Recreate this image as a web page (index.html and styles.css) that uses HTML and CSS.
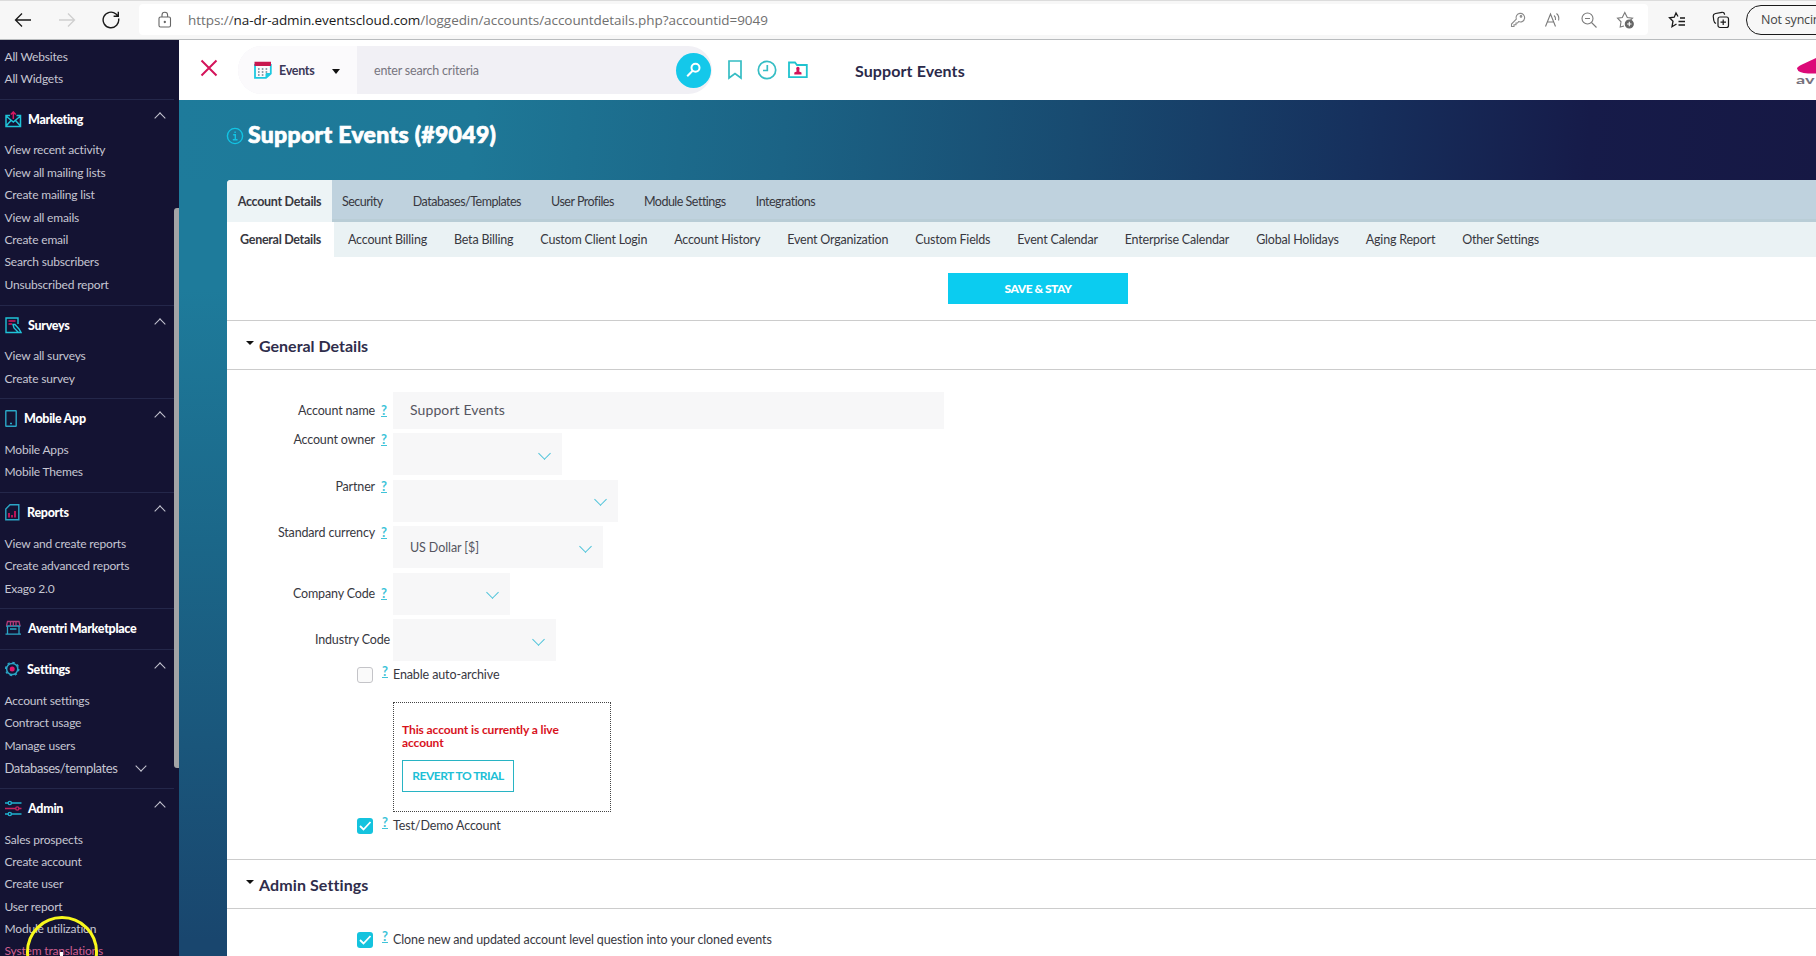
FILE: index.html
```html
<!DOCTYPE html>
<html lang="en">
<head>
    <meta charset="UTF-8">
    <meta name="viewport" content="width=device-width, initial-scale=1.0">
    <title>Support Events (#9049)</title>
    <link rel="stylesheet" href="styles.css">
</head>
<body>
    <div class="browser-bar">
        <div class="nav-buttons">
            <svg width="18" height="18" viewBox="0 0 18 18" fill="none" stroke="#1a1a1a" stroke-width="1.3"><path d="M17 9H1.5M8 2.5L1.5 9L8 15.5"/></svg>
            <svg width="18" height="18" viewBox="0 0 18 18" fill="none" stroke="#cfcfcf" stroke-width="1.3"><path d="M1 9H16.5M10 2.5L16.5 9L10 15.5"/></svg>
            <svg width="18" height="18" viewBox="0 0 18 18" fill="none" stroke="#1a1a1a" stroke-width="1.4"><path d="M16.6 7.5A7.8 7.8 0 1 1 14 3L16 5M16.3 0.8V5.3H11.6"/></svg>
        </div>
        <div class="address">
            <svg class="lock" width="14" height="18" viewBox="0 0 14 18" fill="none" stroke="#666" stroke-width="1.1"><rect x="1" y="6" width="11.5" height="10" rx="1.5"/><path d="M4 6V4a2.8 2.8 0 0 1 5.6 0V6"/><circle cx="6.8" cy="11" r="0.6" fill="#666"/></svg>
            <span class="url">https://<b>na-dr-admin.eventscloud.com</b>/loggedin/accounts/accountdetails.php?accountid=9049</span>
            <div class="address-icons">
                <svg width="16" height="18" viewBox="0 0 16 18" fill="none" stroke="#8a8a8a" stroke-width="1.1"><path d="M6.3 8.2L1.5 13V15.5H4V13.8H6V12H7.5L8.6 10.6A4.3 4.3 0 1 0 6.3 8.2Z"/><circle cx="11" cy="5.4" r="0.8"/></svg>
                <svg width="18" height="18" viewBox="0 0 18 18" fill="none" stroke="#7a7a7a" stroke-width="1.1"><path d="M1.5 15.5L6.5 3L11.5 15.5M3.3 11H9.8M10 4.5Q12 6 11.5 9M12.5 2.5Q15.6 5 14.6 9.5"/></svg>
                <svg width="18" height="18" viewBox="0 0 18 18" fill="none" stroke="#7a7a7a" stroke-width="1.1"><circle cx="7.5" cy="7.5" r="5.5"/><path d="M5 7.5H10M11.5 11.5L16.5 16.5"/></svg>
                <svg width="19" height="18" viewBox="0 0 19 18" fill="none" stroke="#7a7a7a" stroke-width="1.1"><path d="M8 15L4.2 16L5 10.8L1.5 7.2L6.3 6.5L8.8 1.5L11.3 6.5L16.5 7.2L14.5 9"/><circle cx="13.3" cy="13" r="4" fill="#666" stroke="#666"/><path d="M13.3 10.8V15.2M11.1 13H15.5" stroke="#fff"/></svg>
            </div>
        </div>
        <div class="bar-icons">
            <svg width="18" height="18" viewBox="0 0 18 18" fill="none" stroke="#1a1a1a" stroke-width="1.3"><path d="M10 5.5L8 2L6.2 6.2L1.5 6.8L5 10.2L4 15.8L8.5 13M12 7H17M10.5 10.5H17M10.5 14H17"/></svg>
            <svg width="18" height="18" viewBox="0 0 18 18" fill="none" stroke="#1a1a1a" stroke-width="1.2"><rect x="6" y="6" width="10.5" height="10.5" rx="2"/><path d="M11.2 8.5V14M8.5 11.2H14M4 12.5Q2 11.5 1.8 9.5L1.2 5Q1.2 3 3.5 2.5L10 1.3Q12.3 1 12.6 3.8"/></svg>
        </div>
        <div class="sync">Not syncing</div>
    </div>

    <div class="page">
        <div class="sidebar">
            <div class="menu first">
                <a>All Websites</a>
                <a>All Widgets</a>
            </div>
            <div class="menu">
                <h3><svg width="17" height="17" viewBox="0 0 17 17" fill="none" stroke="#1fc3d8" stroke-width="1.5"><path d="M5 4.5H1V15.5H15.5V4.5H11.5M1 5L8.3 11L15.5 5M1 15L6 9.5M15.5 15L10.5 9.5"/><path d="M8.3 8V1.5M5.8 3.5L8.3 1L10.8 3.5" stroke="#d6185f"/></svg><span>Marketing</span><i class="up"></i></h3>
                <a>View recent activity</a>
                <a>View all mailing lists</a>
                <a>Create mailing list</a>
                <a>View all emails</a>
                <a>Create email</a>
                <a>Search subscribers</a>
                <a>Unsubscribed report</a>
            </div>
            <div class="menu">
                <h3><svg width="17" height="17" viewBox="0 0 17 17" fill="none" stroke="#1fc3d8" stroke-width="1.4"><path d="M13 7V1H1V15.5H13M8 7.5L9 11L13.5 15.5H16L14 12L10 7.5Z"/><path d="M3.5 4H10.5M3.5 7H7" stroke="#d6185f"/></svg><span>Surveys</span><i class="up"></i></h3>
                <a>View all surveys</a>
                <a>Create survey</a>
            </div>
            <div class="menu">
                <h3 class="narrow"><svg width="12" height="17" viewBox="0 0 12 17" fill="none" stroke="#2ba6c6" stroke-width="1.4"><rect x="0.8" y="0.8" width="10.4" height="15.4" rx="0.5"/><path d="M5 13.5H7"/></svg><span>Mobile App</span><i class="up"></i></h3>
                <a>Mobile Apps</a>
                <a>Mobile Themes</a>
            </div>
            <div class="menu">
                <h3 class="narrow"><svg width="15" height="17" viewBox="0 0 15 17" fill="none" stroke="#2ba6c6" stroke-width="1.4"><path d="M5 0.8H13.8V15.7H0.8V5Z"/><path d="M4 9V13.5M7 11V13.5M10 7V13.5" stroke="#d6185f" stroke-width="1.7"/></svg><span>Reports</span><i class="up"></i></h3>
                <a>View and create reports</a>
                <a>Create advanced reports</a>
                <a>Exago 2.0</a>
            </div>
            <div class="menu market">
                <h3><svg width="17" height="17" viewBox="0 0 17 17" fill="none" stroke="#2ba6c6" stroke-width="1.3"><path d="M2.5 6V14.2H14V6M0.5 14.2H16M1 6H15.5M5 9H11.5"/><path d="M1.5 6L2.5 1.5H14L15 6M5.5 2V6M8.3 2V6M11 2V6" stroke="#b03b77"/></svg><span>Aventri Marketplace</span></h3>
            </div>
            <div class="menu">
                <h3 class="narrow"><svg width="15" height="17" viewBox="0 0 15 17" fill="none"><circle cx="7.2" cy="8" r="5.6" stroke="#2ba6c6" stroke-width="1.5"/><circle cx="7.2" cy="8" r="6.6" stroke="#2ba6c6" stroke-width="1.4" stroke-dasharray="2.4 2.78"/><circle cx="7.2" cy="8" r="2.5" fill="#e2186c"/></svg><span>Settings</span><i class="up"></i></h3>
                <a>Account settings</a>
                <a>Contract usage</a>
                <a>Manage users</a>
                <a class="parent">Databases/templates<i class="down"></i></a>
            </div>
            <div class="menu last">
                <h3><svg width="17" height="17" viewBox="0 0 17 17" fill="none" stroke="#1fb3d0" stroke-width="1.4"><path d="M0 3H3M6.5 3H16.5M0 14H3M6.5 14H16.5"/><circle cx="4.8" cy="3" r="1.6"/><circle cx="4.8" cy="14" r="1.6"/><path d="M0 8.5H10.5M14 8.5H16.5" stroke="#c5245f"/><circle cx="12.3" cy="8.5" r="1.6" stroke="#c5245f"/></svg><span>Admin</span><i class="up"></i></h3>
                <a>Sales prospects</a>
                <a>Create account</a>
                <a>Create user</a>
                <a>User report</a>
                <a>Module utilization</a>
                <a class="hover">System translations</a>
            </div>
            <div class="scroll-thumb"></div>
            <div class="click-ring"></div>
            <div class="pointer"></div>
        </div>

        <div class="main">
            <div class="topbar">
                <svg class="close" width="18" height="18" viewBox="0 0 18 18" stroke="#d4145a" stroke-width="2"><path d="M1.5 1.5L16.5 16.5M16.5 1.5L1.5 16.5"/></svg>
                <div class="search">
                    <div class="search-type">
                        <svg width="18" height="18" viewBox="0 0 18 18" fill="none"><path d="M1 3V16.8H12L16.8 12.5V3" stroke="#1cc8e0" stroke-width="1.8"/><path d="M12 16.5V12.5H16.5" fill="#1cc8e0" stroke="#1cc8e0"/><path d="M0.5 0.8H17V5H0.5Z" fill="#c8174f"/><path d="M4 8H14M4 11H14M4 14H10" stroke="#6a8090" stroke-width="1.4" stroke-dasharray="1.6 2.2"/></svg>
                        <span>Events</span>
                        <i class="caret"></i>
                    </div>
                    <span class="placeholder">enter search criteria</span>
                    <div class="search-btn">
                        <svg width="17" height="17" viewBox="0 0 17 17" fill="none" stroke="#fff" stroke-width="2"><circle cx="10.5" cy="5.8" r="4"/><path d="M7.6 8.8L2.2 14.2"/></svg>
                    </div>
                </div>
                <div class="shortcuts">
                    <svg width="14" height="20" viewBox="0 0 14 20" fill="none" stroke="#35bdc4" stroke-width="1.7"><path d="M1 1H13V18L7 13.5L1 18Z"/></svg>
                    <svg width="20" height="20" viewBox="0 0 20 20" fill="none" stroke="#35bdc4" stroke-width="1.7"><circle cx="10" cy="10" r="8.7"/><path d="M10.3 5V10.5H6"/></svg>
                    <svg width="20" height="18" viewBox="0 0 20 18" fill="none" stroke="#1fc3cf" stroke-width="1.8"><path d="M1 16.2V1.5H7L9 4H18.8V16.2Z"/><path d="M8.3 8a1.7 1.7 0 1 1 3.2 0L11.2 10.5L13.5 11.5V13.5H6.3V11.5L8.6 10.5Z" fill="#d4145a" stroke="none"/></svg>
                </div>
                <strong class="account">Support Events</strong>
                <div class="logo">
                    <svg width="20" height="16" viewBox="0 0 20 16"><path d="M1 10.5Q1 9 5 7L20 0V15.5H12Q2 15 1 10.5Z" fill="#dc0a78"/></svg>
                    <span>av</span>
                </div>
            </div>

            <div class="banner">
                <svg width="18" height="18" viewBox="0 0 18 18" fill="none" stroke="#12c4e4" stroke-width="1.4"><circle cx="9" cy="9" r="7.6"/><path d="M7.2 7.8H9.3V12.6M6.8 12.8H11.5M9.1 4.5V6" /></svg>
                <h1>Support Events (#9049)</h1>
            </div>

            <div class="content">
                <div class="tabs">
                    <a class="active">Account Details</a>
                    <a>Security</a>
                    <a>Databases/Templates</a>
                    <a>User Profiles</a>
                    <a>Module Settings</a>
                    <a>Integrations</a>
                </div>
                <div class="subtabs">
                    <a class="active">General Details</a>
                    <a>Account Billing</a>
                    <a>Beta Billing</a>
                    <a>Custom Client Login</a>
                    <a>Account History</a>
                    <a>Event Organization</a>
                    <a>Custom Fields</a>
                    <a>Event Calendar</a>
                    <a>Enterprise Calendar</a>
                    <a>Global Holidays</a>
                    <a>Aging Report</a>
                    <a>Other Settings</a>
                </div>
                <div class="actions">
                    <button class="save">SAVE &amp; STAY</button>
                </div>
                <h2><i class="caret"></i>General Details</h2>

                <div class="form">
                    <div class="row name">
                        <label>Account name</label><a class="help">?</a>
                        <div class="input">Support Events</div>
                    </div>
                    <div class="row">
                        <label>Account owner</label><a class="help">?</a>
                        <div class="select owner"><i class="down"></i></div>
                    </div>
                    <div class="row">
                        <label>Partner</label><a class="help">?</a>
                        <div class="select partner"><i class="down"></i></div>
                    </div>
                    <div class="row">
                        <label>Standard currency</label><a class="help">?</a>
                        <div class="select currency">US Dollar [$]<i class="down"></i></div>
                    </div>
                    <div class="row middle">
                        <label>Company Code</label><a class="help">?</a>
                        <div class="select company"><i class="down"></i></div>
                    </div>
                    <div class="row middle">
                        <label class="wide">Industry Code</label>
                        <div class="select industry"><i class="down"></i></div>
                    </div>
                    <div class="check">
                        <span class="box"></span><a class="help">?</a><span class="text">Enable auto-archive</span>
                    </div>
                    <div class="live">
                        <p>This account is currently a live account</p>
                        <button>REVERT TO TRIAL</button>
                    </div>
                    <div class="check">
                        <span class="box on"><svg width="16" height="16" viewBox="0 0 16 16" fill="none" stroke="#fff" stroke-width="1.8"><path d="M3 8L6.5 11.5L13.5 4"/></svg></span><a class="help">?</a><span class="text">Test/Demo Account</span>
                    </div>
                </div>

                <h2 class="admin"><i class="caret"></i>Admin Settings</h2>
                <div class="check clone">
                    <span class="box on"><svg width="16" height="16" viewBox="0 0 16 16" fill="none" stroke="#fff" stroke-width="1.8"><path d="M3 8L6.5 11.5L13.5 4"/></svg></span><a class="help">?</a><span class="text">Clone new and updated account level question into your cloned events</span>
                </div>
            </div>
        </div>
    </div>
</body>
</html>
```
FILE: styles.css
```css
* {
    box-sizing: border-box;
}
body {
    margin: 0;
    height: 956px;
    overflow: hidden;
    font-family: Lato, sans-serif;
    font-size: 12.5px;
    color: #38383f;
    background: #fff;
}
svg {
    display: block;
    flex: none;
}

/* Browser chrome */
.browser-bar {
    display: flex;
    height: 40px;
    padding-top: 4px;
    background: #f7f7f7;
    border-top: 1px solid #dcdcdc;
    border-bottom: 1px solid #b9bcbe;
    font-family: "Open Sans", sans-serif;
    overflow: hidden;
}
.nav-buttons {
    display: flex;
    flex: none;
    gap: 26px;
    width: 139px;
    padding: 6px 0 0 14px;
}
.address {
    display: flex;
    flex: none;
    align-items: center;
    width: 1509px;
    height: 31px;
    margin-top: -1px;
    padding: 0 13px 0 19px;
    background: #fff;
    border-radius: 4px;
}
.url {
    margin-left: 16px;
    font-size: 13.5px;
    letter-spacing: -0.06px;
    color: #707070;
}
.url b {
    font-weight: 400;
    color: #1a1a1a;
}
.address-icons {
    display: flex;
    gap: 18px;
    margin-left: auto;
}
.bar-icons {
    display: flex;
    flex: none;
    gap: 26px;
    padding: 6px 0 0 20px;
}
.sync {
    flex: none;
    height: 30px;
    margin-left: 16px;
    padding: 0 0 0 14px;
    border: 1px solid #1a1a1a;
    border-radius: 15px 0 0 15px;
    line-height: 28px;
    width: 100px;
    font-size: 12.5px;
    letter-spacing: -0.2px;
    white-space: nowrap;
    color: #444;
}
.page {
    display: flex;
    height: 916px;
}

/* Sidebar */
.sidebar {
    position: relative;
    width: 179px;
    flex: none;
    overflow: hidden;
    background: #141333;
    color: #c6c6d2;
}
.menu {
    width: 174px;
    padding-bottom: 9px;
    border-bottom: 1px solid #24274a;
}
.menu.first {
    padding-top: 5px;
}
.menu.last {
    border: none;
}
.menu h3 {
    display: flex;
    align-items: center;
    height: 39px;
    margin: 0;
    padding: 0 8px 0 5px;
    font-size: 12.5px;
    font-weight: 900;
    letter-spacing: -0.3px;
    color: #fff;
}
.menu h3 span {
    margin-left: 6px;
}
.menu h3.narrow span {
    margin-left: 7px;
}
.menu.market {
    padding: 0 0 1px;
}
.menu a {
    display: flex;
    align-items: center;
    height: 22.4px;
    padding-left: 4.5px;
    font-size: 12px;
    letter-spacing: -0.18px;
}
.menu a.parent {
    font-size: 13px;
    letter-spacing: -0.42px;
}
.menu a.hover {
    color: #cf5f8f;
}
.up,
.down {
    width: 8px;
    height: 8px;
    border: solid #c6c6d2;
    border-width: 1.5px 0 0 1.5px;
    transform: rotate(45deg);
}
.up {
    margin: -3px 2px 0 auto;
}
.down {
    border-width: 0 1.5px 1.5px 0;
}
.parent .down {
    margin: -4px 0 0 20px;
}
.scroll-thumb {
    position: absolute;
    top: 168px;
    right: 0;
    width: 5px;
    height: 560px;
    border-radius: 3px 0 0 3px;
    background: #a3a4a6;
}
.click-ring {
    position: absolute;
    left: 26px;
    top: 876px;
    width: 72px;
    height: 72px;
    border: 3px solid #f8f81c;
    border-radius: 50%;
}
.pointer {
    position: absolute;
    left: 60px;
    top: 912px;
    width: 3px;
    height: 4px;
    background: #fff;
}

/* Top bar */
.main {
    flex: 1;
    min-width: 0;
    background: linear-gradient(180deg, #1e7b9b 0, #1e7b9b 250px, #1b6789 500px, #19466e 900px);
}
.topbar {
    display: flex;
    align-items: center;
    height: 60px;
    padding-left: 21px;
    background: #fff;
}
.close {
    margin-top: -4px;
}
.search {
    display: flex;
    align-items: center;
    width: 474px;
    height: 48px;
    margin-left: 20px;
    border-radius: 24px;
    background: #f1f0f5;
    overflow: hidden;
}
.search-type {
    display: flex;
    align-items: center;
    width: 119px;
    height: 48px;
    padding-left: 16px;
    background: #fbfafc;
    font-weight: 700;
    letter-spacing: -0.3px;
    color: #3b3858;
}
.search-type span {
    margin: 0 18px 0 7px;
}
.caret {
    border: 4px solid transparent;
    border-top: 5px solid #111;
    border-bottom: 0;
}
.search-type .caret {
    margin-top: 3px;
}
.placeholder {
    margin-left: 17px;
    letter-spacing: -0.2px;
    color: #777580;
}
.search-btn {
    display: flex;
    align-items: center;
    justify-content: center;
    width: 35px;
    height: 35px;
    margin: 0 1px 0 auto;
    border-radius: 50%;
    background: #14c8ea;
}
.shortcuts {
    display: flex;
    align-items: center;
    gap: 15px;
    margin-left: 16px;
}
.shortcuts svg:last-child {
    margin-left: -4px;
}
.account {
    margin-left: 47px;
    font-size: 16px;
    letter-spacing: 0.1px;
    color: #2b2a4a;
}
.logo {
    width: 20px;
    margin-left: auto;
    padding-top: 3px;
}
.logo span {
    display: block;
    width: 12px;
    font-size: 12px;
    line-height: 11px;
    font-weight: 700;
    transform: scale(1.5, 0.9);
    transform-origin: left center;
    color: #77727d;
}

/* Title */
.banner {
    display: flex;
    align-items: center;
    height: 80px;
    padding: 0 0 9px 47px;
    background: linear-gradient(94deg, #1e7b9b 0, #1e7897 18%, #1b6385 37%, #184a70 55%, #16305d 72%, #161b49 86%, #161844 100%);
}
h1 {
    margin: -3px 0 0 4px;
    font-size: 23px;
    font-weight: 900;
    letter-spacing: 0.3px;
    -webkit-text-stroke: 0.7px #fff;
    color: #fff;
}

/* Account panel */
.content {
    height: 776px;
    margin-left: 48px;
    background: #fff;
    border-radius: 4px 0 0 0;
    overflow: hidden;
}
.tabs,
.subtabs {
    display: flex;
    align-items: center;
    white-space: nowrap;
}
.tabs {
    height: 42px;
    gap: 30px;
    background: #bfd2de;
    font-size: 12.5px;
    letter-spacing: -0.5px;
    box-shadow: inset 0 -3px #b9cdd6;
}
.subtabs {
    height: 35px;
    gap: 27px;
    background: #eaf2f4;
    letter-spacing: -0.2px;
}
.subtabs a {
    padding-bottom: 1px;
}
.tabs .active,
.subtabs .active {
    display: flex;
    align-items: center;
    justify-content: center;
    width: 105px;
    height: 42px;
    margin-right: -20px;
    background: #edf4f6;
    font-weight: 700;
    letter-spacing: -0.3px;
}
.subtabs .active {
    width: 107px;
    height: 35px;
    margin-right: -13px;
    background: #fff;
}
.actions {
    display: flex;
    justify-content: center;
    height: 63px;
    padding-top: 16px;
    padding-left: 33px;
}
.save {
    width: 180px;
    height: 31px;
    border: none;
    background: #0bccf0;
    color: #fff;
    font: 900 12px Lato, sans-serif;
    letter-spacing: -0.5px;
}
h2 {
    display: flex;
    align-items: center;
    height: 50px;
    margin: 0;
    padding: 0 0 0 19px;
    border-top: 1px solid #ccc;
    border-bottom: 1px solid #ccc;
    font-size: 16px;
    color: #2f2d4b;
}
h2 .caret {
    margin: -4px 5px 0 0;
    border-top-width: 4px;
}
h2.admin {
    letter-spacing: 0.1px;
}
.form {
    height: 489px;
    padding-top: 22px;
}
.row {
    display: flex;
    height: 46.5px;
}
.row label {
    width: 148px;
    line-height: 14px;
    text-align: right;
    letter-spacing: -0.15px;
}
.row label.wide {
    width: 163px;
    margin-right: 3px;
}
.row.name {
    height: 41px;
}
.row.name label,
.row.name .help {
    margin-top: 12px;
}
.row.middle label,
.row.middle .help {
    margin-top: 14px;
}
.help {
    width: 8px;
    margin: 0 5px;
    line-height: 13px;
    font-size: 13px;
    font-weight: 700;
    text-align: center;
    text-decoration: underline;
    color: #3fc3d8;
}
.input,
.select {
    display: flex;
    align-items: center;
    justify-content: space-between;
    height: 42px;
    padding: 0 13px 0 17px;
    background: #f7f7f8;
    color: #55555f;
    letter-spacing: -0.1px;
}
.input {
    width: 551px;
    height: 37px;
    padding-bottom: 2px;
    font-size: 14px;
    letter-spacing: 0.1px;
}
.select .down {
    width: 9px;
    height: 9px;
    margin: -2px 0 0 auto;
    border-color: #4cc3d9;
}
.owner { width: 169px; }
.partner { width: 225px; }
.currency { width: 210px; }
.company { width: 117px; }
.industry { width: 163px; }
.check {
    display: flex;
    height: 20px;
    margin-top: 1px;
    padding-left: 130px;
    line-height: 14px;
}
.check .text {
    padding-top: 1px;
    letter-spacing: -0.12px;
}
.box {
    width: 16px;
    height: 16px;
    border: 1px solid #c4c4c8;
    border-radius: 3px;
    background: #fafafa;
}
.box.on {
    border: none;
    background: #14c3de;
}
.check .help {
    margin: -2px 4px 0 8px;
}
.live {
    width: 218px;
    height: 110px;
    margin: 15px 0 6px 166px;
    padding: 20px 8px;
    border: 1px dotted #444;
}
.live p {
    margin: 0 0 11px;
    width: 165px;
    line-height: 13px;
    font-weight: 700;
    font-size: 12px;
    letter-spacing: -0.1px;
    color: #d8121c;
}
.live button {
    width: 112px;
    height: 32px;
    padding: 0;
    border: 1px solid #28b4c4;
    background: #fff;
    color: #20bfd6;
    font: 700 12px Lato, sans-serif;
    letter-spacing: -0.5px;
}
.clone {
    margin-top: 23px;
}
```
